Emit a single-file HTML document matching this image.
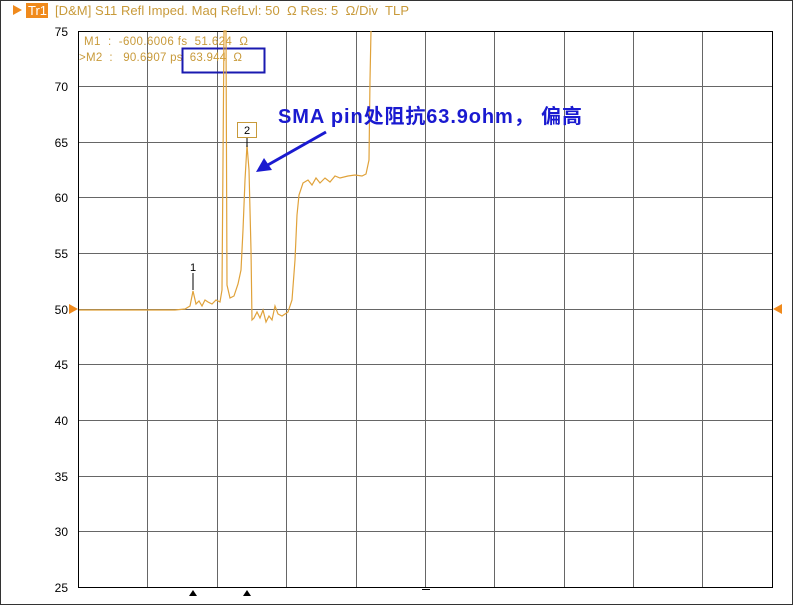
<!DOCTYPE html>
<html><head><meta charset="utf-8"><style>
html,body{margin:0;padding:0;background:#fff;}
body{width:793px;height:605px;position:relative;overflow:hidden;font-family:"Liberation Sans",sans-serif;}
text{white-space:pre;}
</style></head><body>
<svg width="793" height="605" style="position:absolute;left:0;top:0" font-family="Liberation Sans, sans-serif" xml:space="preserve">
<rect x="0.5" y="0.5" width="792" height="604" fill="#fff" stroke="#333" stroke-width="1"/>
<polygon points="13,5 22,10 13,15" fill="#f08a1c"/>
<rect x="26" y="3" width="22" height="15" fill="#f08a1c"/>
<text x="28" y="15" font-size="13" fill="#fff">Tr1</text>
<text x="55" y="15" font-size="13" fill="#c89a3a" textLength="354" lengthAdjust="spacing">[D&amp;M] S11 Refl Imped. Maq RefLvl: 50  Ω Res: 5  Ω/Div  TLP</text>
<g stroke="#666" stroke-width="1">
<line x1="147.5" y1="31" x2="147.5" y2="587"/><line x1="217.5" y1="31" x2="217.5" y2="587"/>
<line x1="286.5" y1="31" x2="286.5" y2="587"/><line x1="356.5" y1="31" x2="356.5" y2="587"/>
<line x1="425.5" y1="31" x2="425.5" y2="587"/><line x1="494.5" y1="31" x2="494.5" y2="587"/>
<line x1="564.5" y1="31" x2="564.5" y2="587"/><line x1="633.5" y1="31" x2="633.5" y2="587"/>
<line x1="702.5" y1="31" x2="702.5" y2="587"/>
<line x1="78" y1="86.5" x2="772" y2="86.5"/><line x1="78" y1="142.5" x2="772" y2="142.5"/>
<line x1="78" y1="197.5" x2="772" y2="197.5"/><line x1="78" y1="253.5" x2="772" y2="253.5"/>
<line x1="78" y1="309.5" x2="772" y2="309.5"/><line x1="78" y1="364.5" x2="772" y2="364.5"/>
<line x1="78" y1="420.5" x2="772" y2="420.5"/><line x1="78" y1="476.5" x2="772" y2="476.5"/>
<line x1="78" y1="531.5" x2="772" y2="531.5"/>
</g>
<rect x="78.5" y="31.5" width="694" height="556" fill="none" stroke="#000" stroke-width="1"/>
<g font-size="12" fill="#000" text-anchor="end">
<text x="68" y="36">75</text><text x="68" y="91">70</text><text x="68" y="147">65</text>
<text x="68" y="202">60</text><text x="68" y="258">55</text><text x="68" y="314">50</text>
<text x="68" y="369">45</text><text x="68" y="425">40</text><text x="68" y="481">35</text>
<text x="68" y="536">30</text><text x="68" y="592">25</text>
</g>
<g font-size="11.5" fill="#c89a3a">
<text x="84" y="45" textLength="164" lengthAdjust="spacing">M1  :  -600.6006 fs  51.624  Ω</text>
<text x="79" y="61" textLength="163" lengthAdjust="spacing">&gt;M2  :   90.6907 ps  63.944  Ω</text>
</g>
<rect x="182.5" y="48.5" width="82" height="24" fill="none" stroke="#1a1ab0" stroke-width="2"/>
<polyline fill="none" stroke="#e0a23a" stroke-width="1.2" points="79,310 150,310 175,310 185,309 190,306 193,291 196,304 199,301 202,306 205,300 208,302 212,304 216,300 220,302 222,290 224,31 226,31 227,285 230,298 234,296 238,284 241,270 243,230 245,180 247,145 249,170 251,250 252,320 254,318 257,312 260,318 263,310 266,322 269,316 272,320 275,306 278,314 282,316 288,312 292,300 295,260 297,215 299,195 303,183 308,180 312,185 316,178 320,183 325,178 330,182 335,176 340,178 348,176 355,175 362,176 366,174 369,160 370,80 371,31"/>
<line x1="193" y1="273" x2="193" y2="290" stroke="#000"/>
<text x="193" y="271" font-size="11" text-anchor="middle">1</text>
<rect x="237.5" y="122.5" width="19" height="15" fill="#fff" stroke="#c89a3a"/>
<text x="247" y="134" font-size="11" text-anchor="middle">2</text>
<line x1="247" y1="138" x2="247" y2="147" stroke="#000"/>
<polygon points="69,304 78,309 69,314" fill="#f08a1c"/>
<polygon points="782,304 773,309 782,314" fill="#f08a1c"/>
<polygon points="193,590 189,596 197,596" fill="#000"/>
<polygon points="247,590 243,596 251,596" fill="#000"/>
<line x1="422" y1="589.5" x2="430" y2="589.5" stroke="#000"/>
<text x="278" y="123" font-size="20" font-weight="bold" fill="#1a1ad0" font-family="Liberation Sans, Noto Sans CJK SC, sans-serif" textLength="304" lengthAdjust="spacing">SMA pin处阻抗63.9ohm， 偏高</text>
<line x1="326" y1="132" x2="266" y2="166" stroke="#1a1ad0" stroke-width="3"/>
<polygon points="256,172 264,158 272,170" fill="#1a1ad0"/>
</svg>
</body></html>
